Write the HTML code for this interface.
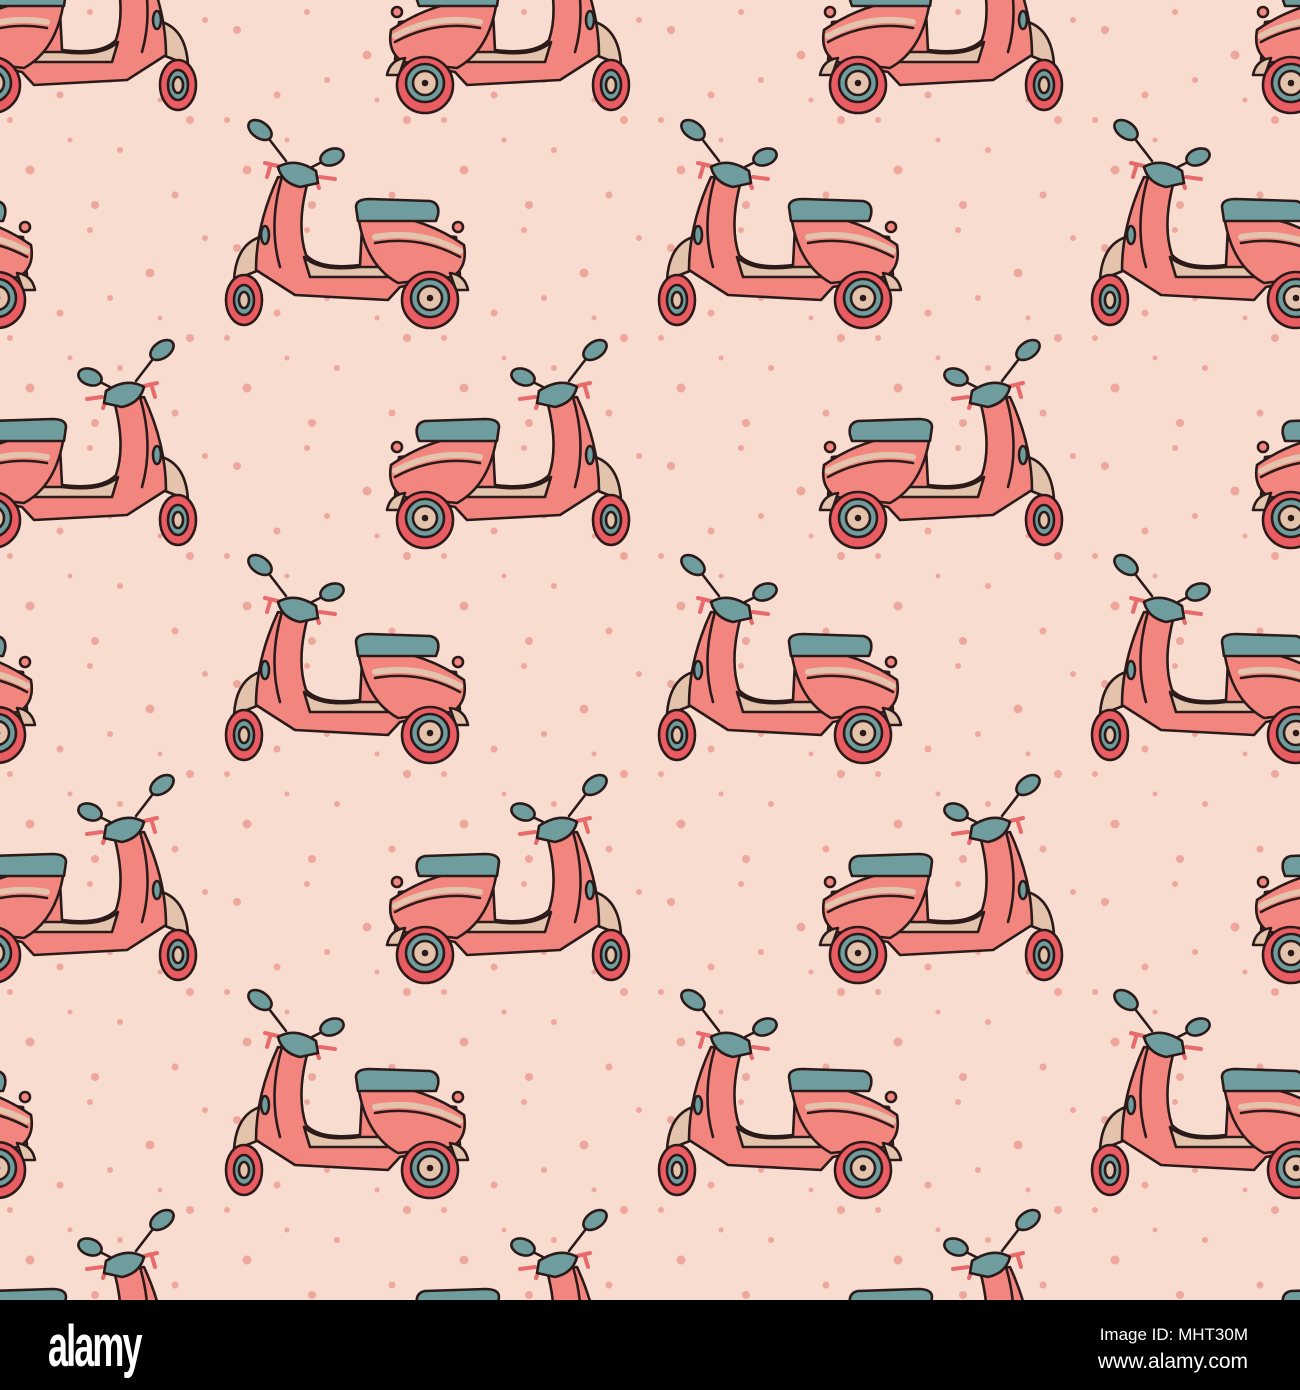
<!DOCTYPE html>
<html><head><meta charset="utf-8"><style>
html,body{margin:0;padding:0;width:1300px;height:1390px;overflow:hidden;background:#000}
#bar{position:absolute;left:0;top:1300px;width:1300px;height:90px;background:#000}
.logo{position:absolute;left:48px;top:1313px;color:#fff;font:bold 58px "Liberation Sans Narrow","Liberation Sans",sans-serif;letter-spacing:-3px;transform:scaleX(0.62);transform-origin:left top}
.id{position:absolute;right:52px;color:#fff;font-family:"Liberation Sans Narrow","Liberation Sans",sans-serif;text-align:right}
</style></head><body>
<svg width="1300" height="1300" viewBox="0 0 1300 1300" style="position:absolute;left:0;top:0">
<defs>
<pattern id="dots" width="217" height="218" patternUnits="userSpaceOnUse">
<g fill="#eea79d">
<circle cx="20" cy="30" r="4"/><circle cx="90" cy="12" r="3"/><circle cx="150" cy="55" r="4.5"/><circle cx="60" cy="95" r="3.5"/><circle cx="190" cy="120" r="4"/><circle cx="120" cy="150" r="3"/><circle cx="30" cy="170" r="4.5"/><circle cx="175" cy="195" r="3.5"/><circle cx="95" cy="205" r="4"/><circle cx="205" cy="20" r="3"/><circle cx="110" cy="80" r="3"/><circle cx="10" cy="120" r="3"/><circle cx="160" cy="100" r="2.5"/><circle cx="70" cy="140" r="2.5"/>
</g></pattern>
<g id="s" stroke="#2b1a1a" stroke-width="2.6" stroke-linejoin="round" stroke-linecap="round">
<path d="M46 20 L66 46" fill="none"/>
<path d="M92 52 L108 44" fill="none"/>
<ellipse cx="40" cy="15" rx="13" ry="8" transform="rotate(35 40 15)" fill="#6f9c9c"/>
<ellipse cx="112" cy="42" rx="12" ry="8" transform="rotate(-20 112 42)" fill="#6f9c9c"/>
<path d="M45 48 L62 52 M50 52 L47 62 M100 62 L115 64 M96 65 L99 73" fill="none" stroke="#e86a6a" stroke-width="4"/>
<path d="M14 165 Q16 130 40 122 L52 150 Z" fill="#e3c3ab"/>
<path d="M58 62 L88 66 Q76 110 86 140 Q100 155 140 150 L142 112 L236 122 L240 160 L180 172 L168 185 L75 180 L36 155 Q36 110 58 62 Z" fill="#f2867f"/>
<path d="M84 142 Q100 157 140 152 L172 152 L170 162 L90 162 Z" fill="#e3c3ab"/>
<path d="M138 100 Q195 96 244 130 Q248 152 232 162 L178 168 Q145 150 138 100 Z" fill="#f2867f"/>
<path d="M155 122 Q200 114 240 136" fill="none" stroke="#e3c3ab" stroke-width="6"/>
<path d="M155 128 Q200 120 240 142" fill="none"/>
<path d="M62 62 Q48 110 60 152" fill="none"/>
<ellipse cx="45" cy="120" rx="4" ry="9" fill="#6f9c9c"/>
<path d="M136 92 Q136 84 150 84 L210 86 Q220 88 218 100 L216 106 L138 106 Z" fill="#6f9c9c"/>
<path d="M58 52 Q75 42 96 56 L98 68 L80 72 Q62 68 58 52 Z" fill="#6f9c9c"/>
<circle cx="238" cy="112" r="5" fill="#f2867f"/>
<path d="M230 158 Q245 160 248 175 L236 175 Z" fill="#e3c3ab"/>
<ellipse cx="24" cy="185" rx="18" ry="25" fill="#e85c62"/>
<ellipse cx="24" cy="185" rx="10" ry="15" fill="#6f9c9c"/>
<ellipse cx="24" cy="185" rx="5" ry="8" fill="#e3c3ab"/>
<circle cx="210" cy="185" r="28" fill="#e85c62"/>
<circle cx="210" cy="183" r="19" fill="#6f9c9c"/>
<circle cx="210" cy="183" r="12" fill="#e3c3ab"/>
<circle cx="210" cy="183" r="2" fill="#2b1a1a"/>
</g>
</defs>
<rect width="1300" height="1300" fill="#f8dccf"/>
<rect width="1300" height="1300" fill="url(#dots)"/>
<g>
<use href="#s" x="-213" y="-320"/><use href="#s" x="220" y="-320"/><use href="#s" x="653" y="-320"/><use href="#s" x="1086" y="-320"/>
<use href="#s" x="-213" y="115"/><use href="#s" x="220" y="115"/><use href="#s" x="653" y="115"/><use href="#s" x="1086" y="115"/>
<use href="#s" x="-213" y="550"/><use href="#s" x="220" y="550"/><use href="#s" x="653" y="550"/><use href="#s" x="1086" y="550"/>
<use href="#s" x="-213" y="985"/><use href="#s" x="220" y="985"/><use href="#s" x="653" y="985"/><use href="#s" x="1086" y="985"/>
</g>
<g>
<use href="#s" transform="translate(202,-100) scale(-1,1)"/><use href="#s" transform="translate(635,-100) scale(-1,1)"/><use href="#s" transform="translate(1068,-100) scale(-1,1)"/><use href="#s" transform="translate(1501,-100) scale(-1,1)"/>
<use href="#s" transform="translate(202,335) scale(-1,1)"/><use href="#s" transform="translate(635,335) scale(-1,1)"/><use href="#s" transform="translate(1068,335) scale(-1,1)"/><use href="#s" transform="translate(1501,335) scale(-1,1)"/>
<use href="#s" transform="translate(202,770) scale(-1,1)"/><use href="#s" transform="translate(635,770) scale(-1,1)"/><use href="#s" transform="translate(1068,770) scale(-1,1)"/><use href="#s" transform="translate(1501,770) scale(-1,1)"/>
<use href="#s" transform="translate(202,1205) scale(-1,1)"/><use href="#s" transform="translate(635,1205) scale(-1,1)"/><use href="#s" transform="translate(1068,1205) scale(-1,1)"/><use href="#s" transform="translate(1501,1205) scale(-1,1)"/>
</g>
</svg>
<div id="bar"></div>
<div class="logo">alamy</div>
<div class="id" style="top:1325px;font-size:17px">Image ID: MHT30M</div>
<div class="id" style="top:1350px;font-size:21px">www.alamy.com</div>
</body></html>
